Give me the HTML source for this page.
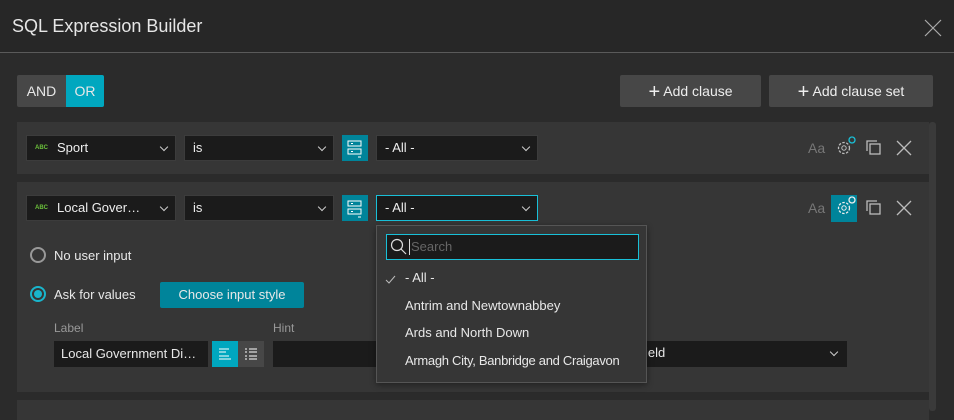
<!DOCTYPE html>
<html><head><meta charset="utf-8"><style>
*{box-sizing:border-box;margin:0;padding:0}
body{width:954px;height:411px;overflow:hidden;background:#2b2b2b;font-family:"Liberation Sans",sans-serif;color:#e8e8e8;position:relative}
.a{position:absolute}
.inp{position:absolute;background:#1b1b1b;border:1px solid #3c3c3c;height:26px;font-size:13px;line-height:24px;padding-left:8px;color:#eee}
.chev{position:absolute;right:8px;top:8px;width:6px;height:6px;border-right:1.3px solid #ccc;border-bottom:1.3px solid #ccc;transform:rotate(45deg)}
.tb{position:absolute;width:26px;height:26px;background:#00849a}
.abc{font-size:6px;color:#6bc13b;font-weight:bold;position:absolute;left:8px;top:1px}
.btn{position:absolute;background:#474747;border-radius:2px;height:32px;font-size:14px;line-height:32px;color:#eee;text-align:center}
.panel{position:absolute;left:17px;width:912px;background:#363636}
.icn{position:absolute;color:#aaa}
</style></head><body>
<div class="a" style="left:0;top:0;width:954px;height:53px;background:#272727;border-bottom:1px solid #5a5a5a"></div>
<div class="a" style="left:12px;top:16px;font-size:18px;color:#e6e6e6">SQL Expression Builder</div>
<svg class="a" style="left:924px;top:19px" width="18" height="18"><path d="M1 1L17 17M17 1L1 17" stroke="#aaa" stroke-width="1.2"/></svg>

<div class="a" style="left:17px;top:75px;width:49px;height:32px;background:#474747;border-radius:2px 0 0 2px;font-size:14px;line-height:32px;text-align:center">AND</div>
<div class="a" style="left:66px;top:75px;width:38px;height:32px;background:#00a7bf;border-radius:0 2px 2px 0;font-size:14px;line-height:32px;text-align:center">OR</div>
<div class="btn" style="left:620px;top:75px;width:141px"><span style="font-size:20px;font-weight:300;vertical-align:-2px">+</span> Add clause</div>
<div class="btn" style="left:769px;top:75px;width:164px"><span style="font-size:20px;font-weight:300;vertical-align:-2px">+</span> Add clause set</div>

<div class="a" style="left:929px;top:122px;width:7px;height:289px;background:#3a3a3a;border-radius:3px"></div>

<div class="panel" style="top:122px;height:52px"></div>
<div class="panel" style="top:182px;height:210px"></div>
<div class="panel" style="top:400px;height:20px"></div>

<!-- row1 -->
<div class="inp" style="left:26px;top:135px;width:150px;padding-left:30px"><span class="abc" style="top:0;line-height:24px">ABC</span>Sport<i class="chev"></i></div>
<div class="inp" style="left:184px;top:135px;width:150px">is<i class="chev"></i></div>
<div class="tb" style="left:342px;top:135px"><svg width="26" height="26"><rect x="6" y="6" width="13" height="5" fill="none" stroke="#fff"/><rect x="6" y="14" width="13" height="5" fill="none" stroke="#fff"/><path d="M9 8.5h2M9 16.5h2M16 22h3" stroke="#fff"/></svg></div>
<div class="inp" style="left:376px;top:135px;width:162px">- All -<i class="chev"></i></div>
<div class="icn" style="left:808px;top:140px;font-size:14px;color:#777">Aa</div>
<svg class="a" style="left:834px;top:135px" width="26" height="26"><circle cx="10" cy="13" r="5.5" fill="none" stroke="#bbb" stroke-width="1.3" stroke-dasharray="2.5 1.5"/><circle cx="10" cy="13" r="2.2" fill="none" stroke="#bbb"/><circle cx="18" cy="5" r="3" fill="none" stroke="#19c0d8" stroke-width="1.3"/></svg>
<svg class="a" style="left:866px;top:140px" width="16" height="16"><rect x="4" y="4" width="10" height="10" fill="none" stroke="#bbb" stroke-width="1.3"/><path d="M1 11V1h10" fill="none" stroke="#bbb" stroke-width="1.3"/></svg>
<svg class="a" style="left:896px;top:140px" width="16" height="16"><path d="M1 1L15 15M15 1L1 15" stroke="#bbb" stroke-width="1.3"/></svg>

<!-- row2 -->
<div class="inp" style="left:26px;top:195px;width:150px;padding-left:30px"><span class="abc" style="top:0;line-height:24px">ABC</span>Local Gover…<i class="chev"></i></div>
<div class="inp" style="left:184px;top:195px;width:150px">is<i class="chev"></i></div>
<div class="tb" style="left:342px;top:195px"><svg width="26" height="26"><rect x="6" y="6" width="13" height="5" fill="none" stroke="#fff"/><rect x="6" y="14" width="13" height="5" fill="none" stroke="#fff"/><path d="M9 8.5h2M9 16.5h2M16 22h3" stroke="#fff"/></svg></div>
<div class="inp" style="left:376px;top:195px;width:162px;border-color:#19c0d8">- All -<i class="chev"></i></div>
<div class="icn" style="left:808px;top:200px;font-size:14px;color:#777">Aa</div>
<div class="a" style="left:831px;top:195px;width:26px;height:27px;background:#00849a"></div>
<svg class="a" style="left:834px;top:195px" width="26" height="26"><circle cx="10" cy="13" r="5.5" fill="none" stroke="#eee" stroke-width="1.3" stroke-dasharray="2.5 1.5"/><circle cx="10" cy="13" r="2.2" fill="none" stroke="#eee"/><circle cx="18" cy="5" r="3" fill="none" stroke="#eee" stroke-width="1.3"/></svg>
<svg class="a" style="left:866px;top:200px" width="16" height="16"><rect x="4" y="4" width="10" height="10" fill="none" stroke="#bbb" stroke-width="1.3"/><path d="M1 11V1h10" fill="none" stroke="#bbb" stroke-width="1.3"/></svg>
<svg class="a" style="left:896px;top:200px" width="16" height="16"><path d="M1 1L15 15M15 1L1 15" stroke="#bbb" stroke-width="1.3"/></svg>

<div class="a" style="left:30px;top:247px;width:16px;height:16px;border:2px solid #999;border-radius:50%"></div>
<div class="a" style="left:54px;top:248px;font-size:13px">No user input</div>
<div class="a" style="left:30px;top:286px;width:16px;height:16px;border:2px solid #19b5cc;border-radius:50%"><div style="margin:2px;width:8px;height:8px;border-radius:50%;background:#19b5cc"></div></div>
<div class="a" style="left:54px;top:287px;font-size:13px">Ask for values</div>
<div class="a" style="left:160px;top:282px;width:144px;height:26px;background:#00849a;border-radius:2px;font-size:13px;line-height:26px;text-align:center">Choose input style</div>
<div class="a" style="left:54px;top:321px;font-size:12px;color:#999">Label</div>
<div class="a" style="left:273px;top:321px;font-size:12px;color:#999">Hint</div>
<div class="a" style="left:54px;top:341px;width:154px;height:26px;background:#1b1b1b;font-size:13px;line-height:26px;padding-left:7px">Local Government Di…</div>
<div class="a" style="left:212px;top:341px;width:26px;height:26px;background:#00a7bf"><svg width="26" height="26"><path d="M7 8h10M7 11h7M7 15h10M7 18h12" stroke="#fff"/></svg></div>
<div class="a" style="left:238px;top:341px;width:26px;height:26px;background:#474747"><svg width="26" height="26"><path d="M7 8h2M11 8h8M7 11h2M11 11h8M7 15h2M11 15h8M7 18h2M11 18h8" stroke="#fff"/></svg></div>
<div class="a" style="left:273px;top:341px;width:574px;height:26px;background:#1b1b1b"><span style="position:absolute;left:372px;top:4px;font-size:13px">ield</span><i class="chev" style="top:8px;right:10px"></i></div>

<!-- popup -->
<div class="a" style="left:376px;top:225px;width:271px;height:158px;background:#363636;border:1px solid #555;box-shadow:0 2px 6px rgba(0,0,0,.4)">
<div class="a" style="left:9px;top:8px;width:253px;height:26px;background:#1b1b1b;border:1px solid #19c0d8"></div>
<svg class="a" style="left:13px;top:12px" width="18" height="18"><circle cx="7" cy="7" r="5.5" fill="none" stroke="#ddd" stroke-width="1.2"/><path d="M11 11l5 5" stroke="#ddd" stroke-width="1.2"/></svg>
<div class="a" style="left:32px;top:13px;width:1px;height:16px;background:#ddd"></div>
<div class="a" style="left:34px;top:13px;font-size:13px;color:#666">Search</div>
<svg class="a" style="left:8px;top:48px" width="12" height="12"><path d="M1 6l3 3 6-7" fill="none" stroke="#bbb"/></svg>
<div class="a" style="left:28px;top:44px;font-size:13px">- All -</div>
<div class="a" style="left:28px;top:72px;font-size:13px">Antrim and Newtownabbey</div>
<div class="a" style="left:28px;top:99px;font-size:13px">Ards and North Down</div>
<div class="a" style="left:28px;top:127px;font-size:13px;letter-spacing:-0.3px">Armagh City, Banbridge and Craigavon</div>
</div>
</body></html>
